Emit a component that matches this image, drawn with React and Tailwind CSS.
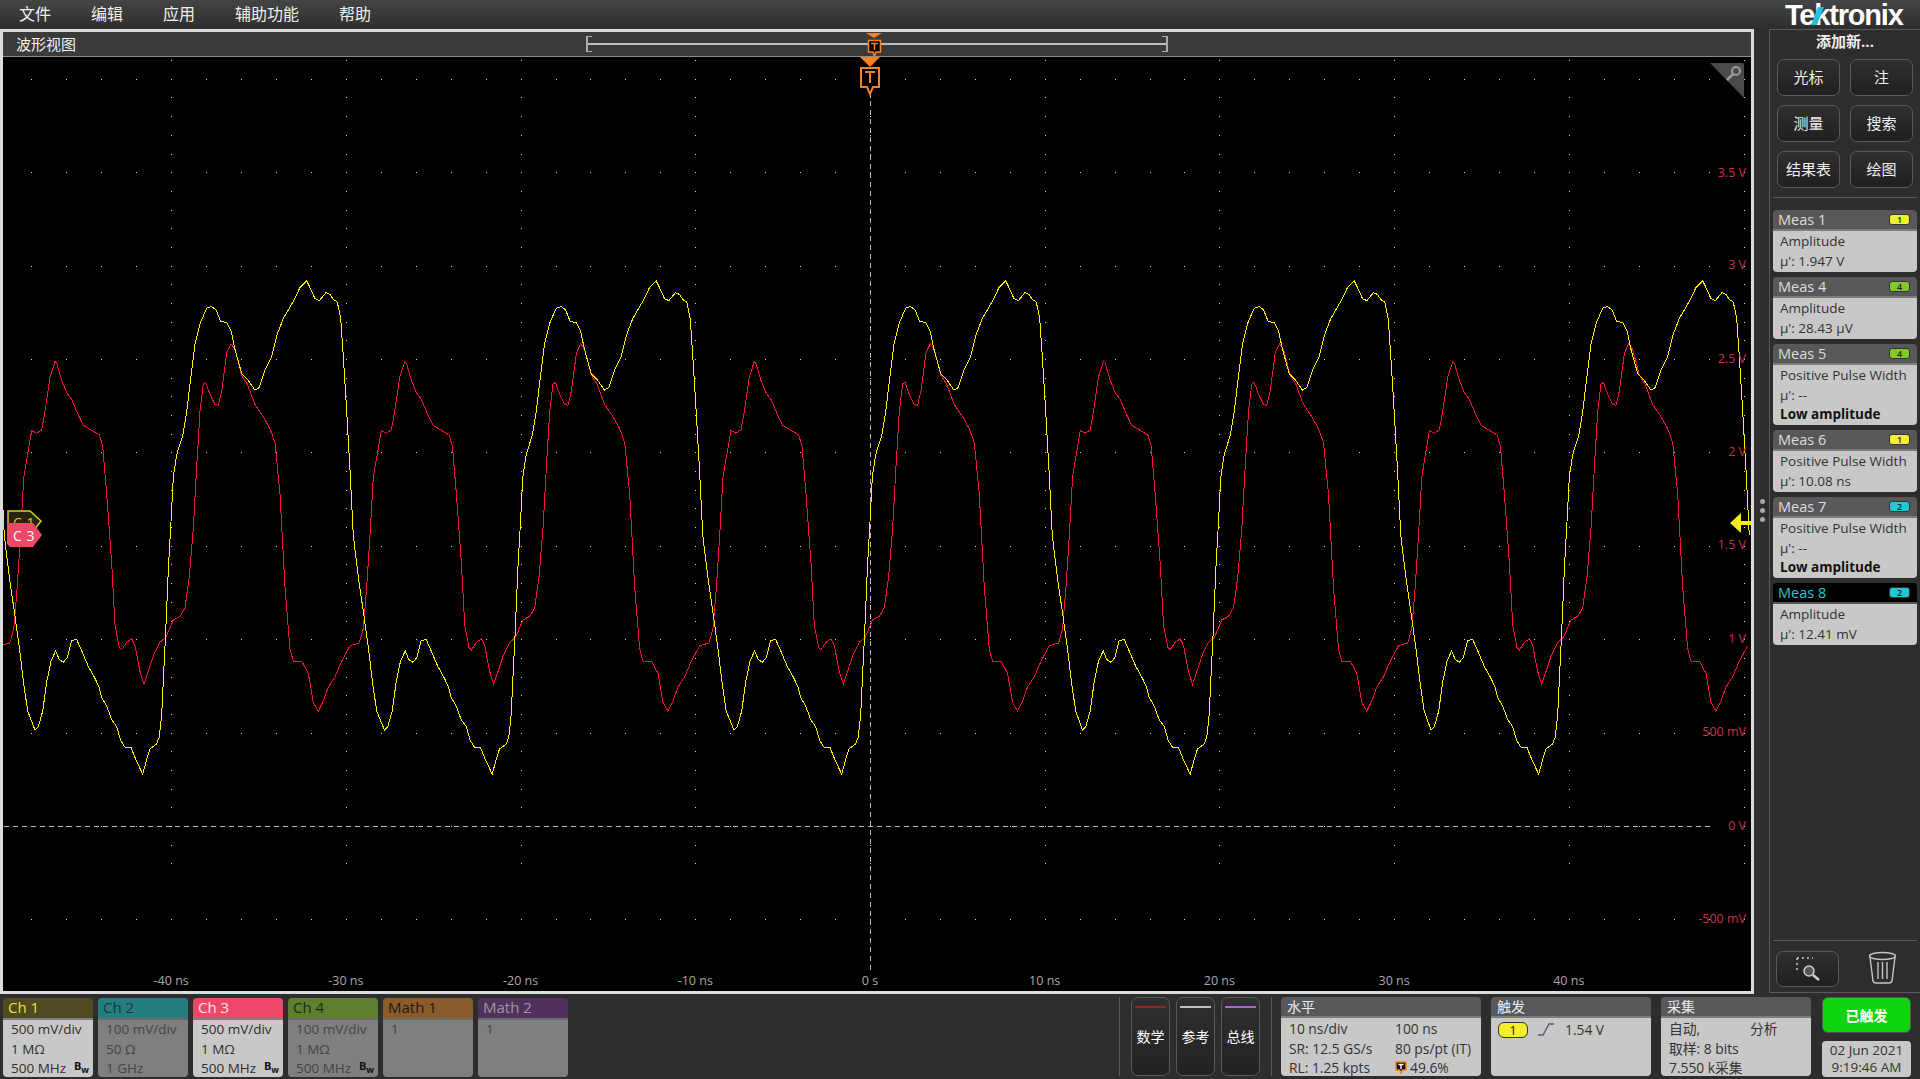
import React from 'react';

const CJK = "font-['Open_Sans','Noto_Sans_CJK_SC',sans-serif]";

const PLOT_X0 = 870;
const DIV_X = 174.7;
const PLOT_Y0 = 826;
const DIV_Y = 93.4;

// traces read off the reference, in crop coordinates (one period each)
const YELLOW = [
  [105,1365],[115,1355],[128,1310],[140,1225],[153,1165],[167,1135],[178,1160],[190,1168],[202,1155],[215,1105],[230,1102],[245,1135],[265,1180],[285,1215],[297,1240],[305,1270],[320,1295],[335,1335],[350,1355],[362,1395],[375,1415],[393,1415],[405,1445],[428,1493],[440,1450],[450,1420],[470,1405],[478,1385],[485,1320],[490,1220],[497,1080],[505,900],[513,760],[520,630],[530,565],[548,510],[560,440],[575,320],[585,245],[600,185],[620,140],[635,135],[648,145],[662,178],[680,182],[693,205],[705,260],[725,330],[745,350],[765,378],[778,370],[795,320],[815,280],[830,220],[850,170],[880,120],[900,80],[920,60],[930,80],[945,112],[958,118],[978,95],[990,100],[1000,115],[1012,122],[1022,170],[1030,280],[1040,440],[1050,610],[1060,800],[1075,920],[1090,1020],[1105,1125],[1118,1230],[1130,1310],
];

const RED = [
  [95,495],[110,503],[125,493],[135,440],[150,340],[165,295],[170,300],[185,350],[200,385],[215,405],[235,450],[250,480],[270,492],[298,508],[308,540],[320,680],[335,880],[345,1060],[358,1125],[365,1132],[380,1110],[395,1100],[405,1120],[420,1195],[432,1232],[450,1180],[462,1145],[480,1110],[498,1095],[520,1045],[540,1035],[555,1010],[568,920],[580,780],[590,600],[600,440],[610,360],[617,355],[630,390],[645,420],[655,422],[665,380],[680,270],[693,243],[705,260],[725,335],[742,360],[765,420],[790,455],[810,490],[825,530],[840,680],[855,950],[870,1130],[880,1165],[905,1165],[925,1200],[940,1285],[955,1310],[970,1280],[985,1240],[1005,1210],[1025,1165],[1050,1120],[1078,1112],[1090,1070],[1100,950],[1110,800],[1120,630],
];

// the two signals drift a little from cycle to cycle
const YELLOW_OFFSETS = [-349, 0, 349.5, 699, 1047.5, 1396, 1745];
const RED_OFFSETS = [-349.5, 0, 349.7, 699.3, 1048.5, 1397.7, 1747];

const tracePath = (pts, offsets) => {
  const out = [];
  offsets.forEach((off) => {
    pts.forEach(([x, y]) => {
      const rx = x / 3 + off;
      if (rx <= 1749.6) out.push(`${rx.toFixed(1)},${(260 + (y * 540) / 1568).toFixed(1)}`);
    });
  });
  return 'M' + out.join('L');
};

const gridDots = () => {
  const dots = [];
  for (let c = -4; c <= 5; c++) {
    for (let i = -2; i <= 41; i++) {
      const y = PLOT_Y0 - i * (DIV_Y / 5);
      if (y > 58 && y < 990) dots.push([PLOT_X0 + c * DIV_X, y]);
    }
  }
  for (let r = -1; r <= 8; r++) {
    for (let i = -25; i <= 25; i++) {
      const x = PLOT_X0 + i * (DIV_X / 5);
      if (x > 4 && x < 1750) dots.push([x, PLOT_Y0 - r * DIV_Y]);
    }
  }
  return dots;
};

const dashes = (from, to) => {
  const out = [];
  for (let p = from; p < to; p += 9) out.push(p);
  return out;
};

const Y_LABELS = [
  ['3.5 V', 173], ['3 V', 265], ['2.5 V', 359], ['2 V', 452], ['1.5 V', 545],
  ['1 V', 639], ['500 mV', 732], ['0 V', 826], ['-500 mV', 919],
];

const X_LABELS = ['-40 ns', '-30 ns', '-20 ns', '-10 ns', '0 s', '10 ns', '20 ns', '30 ns', '40 ns'];

const MEAS = [
  { name: 'Meas 1', ch: '1', color: 'bg-[#f5ee2a]', title: 'Amplitude', value: "μ': 1.947 V" },
  { name: 'Meas 4', ch: '4', color: 'bg-[#82c828]', title: 'Amplitude', value: "μ': 28.43 μV" },
  { name: 'Meas 5', ch: '4', color: 'bg-[#82c828]', title: 'Positive Pulse Width', value: "μ': --", low: true },
  { name: 'Meas 6', ch: '1', color: 'bg-[#f5ee2a]', title: 'Positive Pulse Width', value: "μ': 10.08 ns" },
  { name: 'Meas 7', ch: '2', color: 'bg-[#1fc8d4]', title: 'Positive Pulse Width', value: "μ': --", low: true },
  { name: 'Meas 8', ch: '2', color: 'bg-[#1fc8d4]', title: 'Amplitude', value: "μ': 12.41 mV", active: true },
];

const CHANNELS = [
  { name: 'Ch 1', head: 'bg-[#4f4a22] text-[#e8e23a]', on: true, lines: ['500 mV/div', '1 MΩ', '500 MHz'], bw: true },
  { name: 'Ch 2', head: 'bg-[#267d80] text-[#17393b]', lines: ['100 mV/div', '50 Ω', '1 GHz'] },
  { name: 'Ch 3', head: 'bg-[#ee4868] text-[#ffe6ea]', on: true, lines: ['500 mV/div', '1 MΩ', '500 MHz'], bw: true },
  { name: 'Ch 4', head: 'bg-[#5f7f30] text-[#1c2c10]', lines: ['100 mV/div', '1 MΩ', '500 MHz'], bw: true },
  { name: 'Math 1', head: 'bg-[#8a5c2c] text-[#221a10]', lines: ['1'] },
  { name: 'Math 2', head: 'bg-[#52305e] text-[#9a9a9a]', lines: ['1'] },
];

const BW = () => (
  <span className="absolute right-[4px] bottom-[6px] text-[11px] leading-none font-bold text-[#111]">
    B<span className="relative top-[3px] text-[9px]">w</span>
  </span>
);

const ChannelBox = ({ c }) => (
  <div className="relative w-[90px] h-[79px] rounded-[4px] overflow-hidden shrink-0">
    <div className={`h-[20px] pl-[5px] text-[15px] leading-[19px] ${c.head}`}>{c.name}</div>
    <div className={`h-[59px] border-t-2 pl-[8px] text-[13.5px] leading-[19.5px] ${c.on ? 'bg-[#c8c8c8] border-[#808080] text-[#2e2e2e]' : 'bg-[#7f7f7f] border-[#6a6a6a] text-[#444444]'}`}>
      {c.lines.map((l) => <div key={l}>{l}</div>)}
    </div>
    {c.bw && <BW />}
  </div>
);

const SideButton = ({ label, bar }) => (
  <div className="relative w-[39px] h-[79px] rounded-[7px] border border-[#5c5854] bg-gradient-to-b from-[#2f2f2f] to-[#222222] flex items-center justify-center text-[14px] text-white">
    <span className={`absolute top-[8px] left-[3px] right-[3px] h-[2px] ${bar}`} />
    {label}
  </div>
);

const ActionButton = ({ children }) => (
  <div className="h-[37px] pb-[1px] rounded-[7px] border border-[#5c5854] bg-gradient-to-b from-[#303030] to-[#1f1f1f] flex items-center justify-center text-[15px] text-[#eeeeee]">
    {children}
  </div>
);

const MeasCard = ({ m }) => (
  <div className="rounded-[4px] overflow-hidden">
    <div className={`h-[19px] flex items-center justify-between pl-[5px] pr-[7px] text-[14.5px] ${m.active ? 'bg-black text-[#1fc8d4]' : 'bg-[#58585a] text-[#dddddd]'}`}>
      <span>{m.name}</span>
      <span className={`w-[21px] h-[11px] rounded-[3px] border border-[#333] text-[9px] leading-[9px] text-center text-[#222] font-semibold ${m.color}`}>{m.ch}</span>
    </div>
    <div className={`border-t-2 pl-[7px] pt-[1px] bg-[#c8c8c8] text-[13.5px] leading-[19.5px] text-[#333333] ${m.low ? 'h-[62px]' : 'h-[43px]'} ${m.active ? 'border-[#555555]' : 'border-[#7c7c7c]'}`}>
      <div>{m.title}</div>
      <div>{m.value}</div>
      {m.low && <div className="font-bold text-[#111111]">Low amplitude</div>}
    </div>
  </div>
);

const InfoBox = ({ title, className, children }) => (
  <div className={`h-[79px] rounded-[4px] overflow-hidden shrink-0 ${className}`}>
    <div className="h-[19px] bg-[#58585a] pl-[6px] text-[14px] leading-[19px] text-[#eeeeee]">{title}</div>
    <div className="h-[60px] border-t-2 border-[#7c7c7c] bg-[#c8c8c8] text-[13.8px] leading-[19.5px] text-[#333333]">
      {children}
    </div>
  </div>
);

const Waveform = () => (
  <div className="relative flex-1 bg-black overflow-hidden">
    <svg className="absolute inset-0" width="1748" height="934" viewBox="3 57 1748 934">
      <g fill="#d8d8d8" shapeRendering="crispEdges">
        {gridDots().map(([x, y], i) => <rect key={i} x={Math.round(x)} y={Math.round(y)} width="1" height="1" />)}
      </g>
      <g fill="#b8b8b8" shapeRendering="crispEdges">
        {dashes(4, 1712).map((x) => <rect key={x} x={x} y="826" width="5" height="1" />)}
        {dashes(92, 968).map((y) => <rect key={y} x="870" y={y} width="1" height="5" />)}
      </g>
      <path d={tracePath(RED, RED_OFFSETS)} fill="none" stroke="#f0143c" strokeWidth="1" shapeRendering="crispEdges" />
      <path d={tracePath(YELLOW, YELLOW_OFFSETS)} fill="none" stroke="#fff000" strokeWidth="1" shapeRendering="crispEdges" />
      {/* trigger marker */}
      <path d="M860 57H880L870 67Z" fill="#f58220" />
      <path d="M861 68H879V87H873L870 94L867 87H861Z" fill="#000" stroke="#f58220" strokeWidth="2" />
      <path d="M865 72H875M870 72V83" stroke="#f58220" strokeWidth="2" fill="none" />
      {/* wrench corner */}
      <path d="M1710 63H1742Q1744 63 1744 65V98Z" fill="#4a4a4a" />
      <circle cx="1736" cy="71" r="4" fill="none" stroke="#9a9a9a" strokeWidth="2" />
      <path d="M1733 74L1727 80" stroke="#9a9a9a" strokeWidth="2.5" fill="none" />
      {/* yellow offset arrow */}
      <path d="M1730 523L1741 513V521H1751V525H1741V533Z" fill="#f5ea20" />
      {/* channel tags */}
      <path d="M8 511H30L41 521L34 530H8Z" fill="#26240c" stroke="#d8d020" strokeWidth="1.5" />
    </svg>
    <span className="absolute left-[10px] top-[458px] text-[14px] leading-[16px] text-[#d8d020] tracking-[0.5px]">C 1</span>
    <svg className="absolute left-[4px] top-[466px]" width="36" height="25" viewBox="0 0 36 25">
      <path d="M0 0H26L35 12L26 24H3L0 21Z" fill="#ee4868" />
    </svg>
    <span className="absolute left-[10px] top-[471px] text-[14px] leading-[16px] text-white tracking-[0.5px]">C 3</span>
    {Y_LABELS.map(([t, y]) => (
      <span key={t} className="absolute right-[5px] text-[12.5px] leading-[14px] text-[#c8304c] whitespace-nowrap" style={{ top: y - 57 - 7 }}>{t}</span>
    ))}
    {X_LABELS.map((t, i) => (
      <span key={t} className="absolute top-[917px] w-[60px] -ml-[30px] text-center text-[12.5px] leading-[14px] text-[#a8a8a8]" style={{ left: PLOT_X0 + (i - 4) * DIV_X - 3 }}>{t}</span>
    ))}
  </div>
);

const App = () => {
  return (
    <div className={`w-[1920px] h-[1079px] overflow-hidden bg-[#2d2d2d] flex flex-col ${CJK}`}>
      {/* menu bar */}
      <div className="h-[29px] shrink-0 flex bg-gradient-to-b from-[#454545] to-[#2d2d2d]">
        <div className="flex items-center gap-[40px] pl-[19px] pb-[2px] text-[16px] text-[#f0f0f0]">
          <span>文件</span><span>编辑</span><span>应用</span><span>辅助功能</span><span>帮助</span>
        </div>
      </div>

      <div className="flex h-[965px] shrink-0">
        {/* waveform window */}
        <div className="w-[1754px] flex flex-col border-[3px] border-[#dcdcdc]">
          <div className="h-[25px] shrink-0 relative flex items-center pl-[13px] bg-[#3a3a38] border-b border-[#8a8a8a] text-[15px] text-[#f0f0f0] leading-none">
            波形视图
            <span className="absolute left-[583px] top-[4px] w-[6px] h-[16px] border-l-2 border-y border-[#aaaaaa]" />
            <span className="absolute left-[1159px] top-[4px] w-[6px] h-[16px] border-r-2 border-y border-[#aaaaaa]" />
            <span className="absolute left-[585px] top-[11px] w-[578px] h-[2px] bg-[#bcbcbc]" />
            <svg className="absolute left-[860px] top-0" width="20" height="25" viewBox="0 0 20 25">
              <path d="M3 1H19L11 6Z" fill="#f58220" />
              <path d="M5.5 8.5H17.5V20H13L11.5 24L10 20H5.5Z" fill="#000" stroke="#f58220" strokeWidth="1.6" />
              <path d="M8 11.5H15M11.5 11.5V18" stroke="#f58220" strokeWidth="1.6" fill="none" />
            </svg>
          </div>
          <Waveform />
        </div>

        {/* right side panel */}
        <div className="relative w-[166px] pl-[15px]">
          <span className="absolute left-[6px] top-[470px] flex flex-col gap-[4px]">
            <i className="w-[5px] h-[5px] rounded-full bg-[#a8a8a8]" />
            <i className="w-[5px] h-[5px] rounded-full bg-[#a8a8a8]" />
            <i className="w-[5px] h-[5px] rounded-full bg-[#a8a8a8]" />
          </span>
          <div className="relative h-[964px] border-l border-t border-b border-[#5a5a5a] flex flex-col pl-[3px] pr-[3px]">
            <div className="absolute left-[15px] -top-[29px] h-[29px] flex items-center font-['Liberation_Sans',sans-serif] font-bold text-[29px] text-white tracking-[-1.2px]">
              Tektronix
              <svg className="absolute left-[26px] top-[6px]" width="14" height="20" viewBox="0 0 14 20">
                <path d="M7 0H13L6 18H0Z" fill="#22c3e0" />
              </svg>
            </div>
            <div className="h-[29px] shrink-0 text-center text-[15px] leading-[23px] font-bold text-[#eeeeee]">添加新...</div>
            <div className="grid grid-cols-2 gap-x-[10px] gap-y-[9px] px-[4px]">
              <ActionButton>光标</ActionButton>
              <ActionButton>注</ActionButton>
              <ActionButton>测量</ActionButton>
              <ActionButton>搜索</ActionButton>
              <ActionButton>结果表</ActionButton>
              <ActionButton>绘图</ActionButton>
            </div>
            <div className="h-px shrink-0 mt-[9px] mb-[12px] bg-[#5a5a5a]" />
            <div className="flex flex-col gap-[5px]">
              {MEAS.map((m) => <MeasCard key={m.name} m={m} />)}
            </div>
            <div className="mt-auto">
              <div className="h-px bg-[#5a5a5a]" />
              <div className="flex items-start h-[51px] pl-[3px] pt-[10px]">
                <div className="w-[63px] h-[36px] rounded-[7px] border border-[#5c5854] bg-gradient-to-b from-[#303030] to-[#1f1f1f] flex items-center justify-center">
                  <svg width="28" height="26" viewBox="0 0 28 26" fill="none">
                    <path d="M3 2H19M3 2V16" stroke="#c8c8c8" strokeDasharray="2 3" strokeWidth="1.5" />
                    <circle cx="15" cy="15" r="5" fill="#555" stroke="#d0d0d0" strokeWidth="1.5" />
                    <path d="M19 19L25 24" stroke="#d0d0d0" strokeWidth="2.5" />
                  </svg>
                </div>
                <svg className="ml-[29px]" width="29" height="33" viewBox="0 0 29 33" fill="none" stroke="#c4c4c4" strokeWidth="1.4">
                  <ellipse cx="14.5" cy="5" rx="13" ry="3.5" />
                  <path d="M2 6L5 30Q5.5 32 8 32H21Q23.5 32 24 30L27 6" />
                  <path d="M10 11V28M14.5 11V28M19 11V28" />
                </svg>
              </div>
            </div>
          </div>
        </div>
      </div>

      {/* bottom results bar */}
      <div className="flex h-[85px] items-start pt-[3px]">
        <div className="flex gap-[5px] pl-[3px] pt-[1px]">
          {CHANNELS.map((c) => <ChannelBox key={c.name} c={c} />)}
        </div>
        <div className="ml-[551px] w-px h-[79px] bg-[#5a5a5a]" />
        <div className="flex gap-[6px] ml-[11px]">
          <SideButton label="数学" bar="bg-[#a02020]" />
          <SideButton label="参考" bar="bg-[#c0c0c0]" />
          <SideButton label="总线" bar="bg-[#b060e8]" />
        </div>
        <div className="ml-[11px] w-px h-[79px] bg-[#5a5a5a]" />
        <InfoBox title="水平" className="ml-[9px] w-[200px]">
          <div className="grid grid-cols-[106px_1fr] pl-[8px] pt-[1px] whitespace-nowrap">
            <span>10 ns/div</span><span>100 ns</span>
            <span>SR: 12.5 GS/s</span><span>80 ps/pt (IT)</span>
            <span>RL: 1.25 kpts</span>
            <span className="flex items-center gap-[3px]">
              <svg width="12" height="13" viewBox="0 0 12 13">
                <path d="M1 1H11V9H7.5L6 12L4.5 9H1Z" fill="#111" stroke="#f58220" strokeWidth="1.6" />
                <path d="M3.5 3.5H8.5M6 3.5V8" stroke="#fff" strokeWidth="1.4" />
              </svg>
              49.6%
            </span>
          </div>
        </InfoBox>
        <InfoBox title="触发" className="ml-[10px] w-[160px]">
          <div className="flex items-center pl-[7px] pt-[2px]">
            <span className="w-[30px] h-[16px] rounded-[6px] border border-[#333] bg-[#f5ee2a] text-center text-[13px] leading-[14px] text-[#222]">1</span>
            <svg className="ml-[10px]" width="16" height="13" viewBox="0 0 16 13" fill="none" stroke="#55557a" strokeWidth="1.3">
              <path d="M0 12H5L11 1H16" />
            </svg>
            <span className="ml-[11px]">1.54 V</span>
          </div>
        </InfoBox>
        <InfoBox title="采集" className="ml-[10px] w-[150px]">
          <div className="pl-[8px] pt-[1px] whitespace-nowrap">
            <div className="flex"><span className="w-[81px]">自动,</span><span>分析</span></div>
            <div>取样: 8 bits</div>
            <div>7.550 k采集</div>
          </div>
        </InfoBox>
        <div className="ml-[11px] w-[89px] flex flex-col gap-[8px]">
          <div className="h-[36px] rounded-[6px] border border-[#555] bg-[#10d410] flex items-center justify-center text-[14px] font-bold text-white">已触发</div>
          <div className="h-[36px] rounded-[4px] bg-[#c8c8c8] text-center text-[13.5px] leading-[17px] pt-[1px] text-[#333333]">
            <div>02 Jun 2021</div>
            <div>9:19:46 AM</div>
          </div>
        </div>
      </div>
    </div>
  );
};

export default App;
